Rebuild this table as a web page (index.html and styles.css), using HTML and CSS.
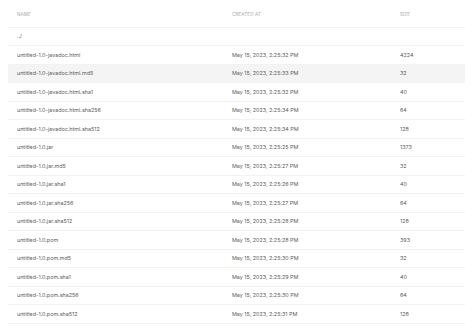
FILE: index.html
```html
<!DOCTYPE html>
<html>
<head>
    <title>Index of /untitled/1.0</title>
    <meta charset="UTF-8">
    <link rel="stylesheet" href="styles.css">
</head>
<body>
    <div class="listing">
        <table>
            <thead>
                <tr>
                    <th class="col-name">Name</th>
                    <th class="col-date">Created at</th>
                    <th class="col-size">Size</th>
                </tr>
            </thead>
            <tbody>
                <tr><td>../</td><td></td><td></td></tr>
                <tr><td>untitled-1.0-javadoc.html</td><td>May 15, 2023, 2:25:32 PM</td><td>4224</td></tr>
                <tr class="hover"><td>untitled-1.0-javadoc.html.md5</td><td>May 15, 2023, 2:25:33 PM</td><td>32</td></tr>
                <tr><td>untitled-1.0-javadoc.html.sha1</td><td>May 15, 2023, 2:25:32 PM</td><td>40</td></tr>
                <tr><td>untitled-1.0-javadoc.html.sha256</td><td>May 15, 2023, 2:25:34 PM</td><td>64</td></tr>
                <tr><td>untitled-1.0-javadoc.html.sha512</td><td>May 15, 2023, 2:25:34 PM</td><td>128</td></tr>
                <tr><td>untitled-1.0.jar</td><td>May 15, 2023, 2:25:25 PM</td><td>1373</td></tr>
                <tr><td>untitled-1.0.jar.md5</td><td>May 15, 2023, 2:25:27 PM</td><td>32</td></tr>
                <tr><td>untitled-1.0.jar.sha1</td><td>May 15, 2023, 2:25:26 PM</td><td>40</td></tr>
                <tr><td>untitled-1.0.jar.sha256</td><td>May 15, 2023, 2:25:27 PM</td><td>64</td></tr>
                <tr><td>untitled-1.0.jar.sha512</td><td>May 15, 2023, 2:25:28 PM</td><td>128</td></tr>
                <tr><td>untitled-1.0.pom</td><td>May 15, 2023, 2:25:28 PM</td><td>393</td></tr>
                <tr><td>untitled-1.0.pom.md5</td><td>May 15, 2023, 2:25:30 PM</td><td>32</td></tr>
                <tr><td>untitled-1.0.pom.sha1</td><td>May 15, 2023, 2:25:29 PM</td><td>40</td></tr>
                <tr><td>untitled-1.0.pom.sha256</td><td>May 15, 2023, 2:25:30 PM</td><td>64</td></tr>
                <tr><td>untitled-1.0.pom.sha512</td><td>May 15, 2023, 2:25:31 PM</td><td>128</td></tr>
            </tbody>
        </table>
    </div>
</body>
</html>
```
FILE: styles.css
```css
* { margin: 0; padding: 0; box-sizing: border-box; }
body { font-family: Inter, 'Noto Sans', sans-serif; background: white; color: #5c5c5c; }
.listing { padding: 0 9px 0 8px; }
table { width: 100%; border-collapse: collapse; table-layout: fixed; }
th, td { padding: 0 9px; text-align: left; border-bottom: 1px solid #f2f2f2; white-space: nowrap; }
th { height: 27px; padding-top: 3px; font-size: 4.6px; font-weight: 400; color: #a8a8a8; text-transform: uppercase; letter-spacing: 0.02em; }
td { height: 18.5px; font-size: 5.4px; color: #5c5c5c; }
.col-name { width: 215px; }
.col-date { width: 168px; }
tr.hover td { background: #f4f4f5; }
```
